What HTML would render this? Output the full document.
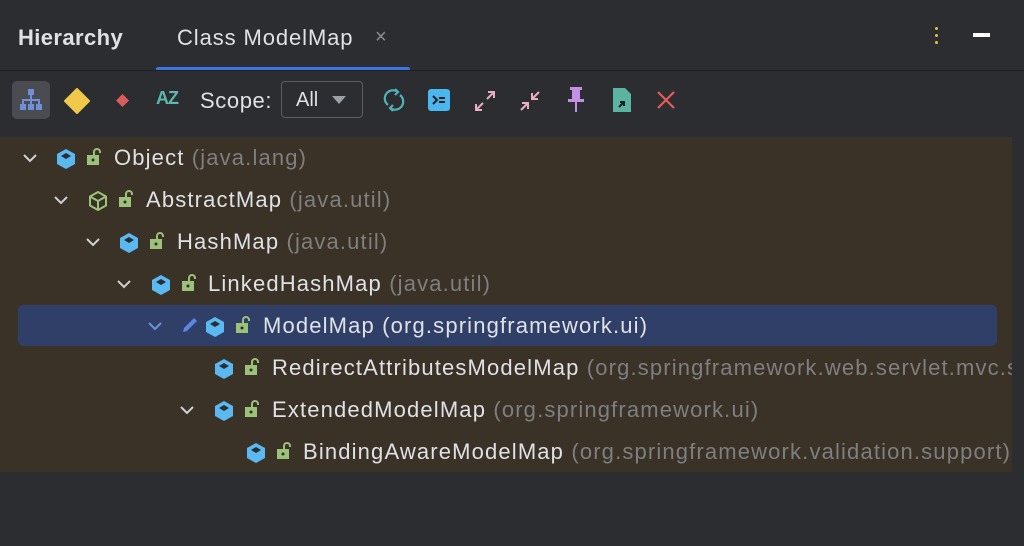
<!DOCTYPE html>
<html><head><style>
body{margin:0;width:1024px;height:546px;background:#2b2d30;font-family:"Liberation Sans",sans-serif;position:relative;overflow:hidden;color:#dfe1e5}
.a{position:absolute}
.tree{left:0;top:137px;width:1012px;height:335px;background:#3a3127}
.sel{left:18px;top:305px;width:979px;height:41px;background:#2f3f68;border-radius:5px}
.row{position:absolute;height:42px;line-height:42px;font-size:22px;letter-spacing:1.15px;white-space:nowrap}
.row .p{color:#7f7f80}
.row svg{position:absolute;top:11px}
</style></head><body>
<div class="a" style="left:18px;top:25px;font-size:22px;font-weight:bold;color:#dfe1e5;letter-spacing:0.4px">Hierarchy</div>
<div class="a" style="left:177px;top:25px;font-size:22px;color:#dfe1e5;letter-spacing:0.9px">Class ModelMap</div>
<div class="a" style="left:375px;top:26px;font-size:20px;color:#8b8e94">×</div>
<div class="a" style="left:156px;top:67px;width:254px;height:4px;background:#3d74e0;border-radius:2px"></div>
<div class="a" style="left:0;top:70px;width:1024px;height:1px;background:#1e1f22"></div>
<div class="a" style="left:935px;top:27px;width:3px;height:3px;background:#e8c13f;border-radius:2px;box-shadow:0 7px #e8c13f,0 14px #e8c13f"></div>
<div class="a" style="left:973px;top:33px;width:17px;height:4px;background:#fff"></div>

<div class="a" style="left:12px;top:81px;width:38px;height:38px;background:#4a4c52;border-radius:5px"></div>
<svg class="a" style="left:18px;top:87px" width="26" height="26" viewBox="0 0 26 26" fill="#6f8fd8"><rect x="10" y="2" width="6" height="6"/><rect x="12" y="8" width="2" height="5"/><rect x="4" y="12" width="18" height="2"/><rect x="4" y="12" width="2" height="5"/><rect x="12" y="12" width="2" height="5"/><rect x="20" y="12" width="2" height="5"/><rect x="2" y="17" width="6" height="6"/><rect x="10" y="17" width="6" height="6"/><rect x="18" y="17" width="6" height="6"/></svg>
<svg class="a" style="left:64px;top:88px" width="26" height="26"><path d="M13 1 L25 13 L13 25 L1 13Z" fill="#f0c94a" stroke="#f0c94a" stroke-linejoin="round" stroke-width="2"/></svg>
<svg class="a" style="left:115px;top:93px" width="15" height="15"><path d="M7.5 1 L14 7.5 L7.5 14 L1 7.5Z" fill="#db5c5c"/></svg>
<div class="a" style="left:156px;top:88px;font-size:18px;color:#5fb8ad;font-weight:bold;letter-spacing:-1px">AZ</div>
<div class="a" style="left:200px;top:88px;font-size:22px;color:#dfe1e5;letter-spacing:0.6px">Scope:</div>
<div class="a" style="left:281px;top:81px;width:82px;height:37px;border:1px solid #5a5d63;border-radius:4px;box-sizing:border-box"></div>
<div class="a" style="left:296px;top:89px;font-size:20px">All</div>
<svg class="a" style="left:331px;top:95px" width="16" height="10"><path d="M1 1 L15 1 L8 9Z" fill="#9da0a8"/></svg>
<svg class="a" style="left:381px;top:87px" width="26" height="26" fill="none" stroke="#4fb3b7" stroke-width="2.2"><path d="M7 18 A8 8 0 0 1 17 5"/><path d="M19 8 A8 8 0 0 1 9 21"/><path d="M14 2 L17 5 L14 8" /><path d="M12 18 L9 21 L12 24"/></svg>
<svg class="a" style="left:428px;top:89px" width="22" height="22"><rect x="0" y="0" width="22" height="22" rx="3" fill="#4ab7ee"/><path d="M5 7 L9 11 L5 15" stroke="#1e1f22" stroke-width="2" fill="none"/><path d="M11 9 H17 M11 13 H17" stroke="#1e1f22" stroke-width="2"/></svg>
<svg class="a" style="left:472px;top:88px" width="26" height="26" stroke="#e9aec0" stroke-width="2" fill="none"><path d="M15 11 L22 4 M16 4 H22 V10 M11 15 L4 22 M4 16 V22 H10"/></svg>
<svg class="a" style="left:517px;top:88px" width="26" height="26" stroke="#e9aec0" stroke-width="2" fill="none"><path d="M15 11 L22 4 M15 5 V11 H21 M11 15 L4 22 M5 15 H11 V21"/></svg>
<svg class="a" style="left:565px;top:86px" width="22" height="28" fill="#c490e6"><rect x="5" y="1" width="12" height="3"/><rect x="7" y="4" width="8" height="9"/><rect x="3" y="13" width="16" height="3"/><rect x="10" y="16" width="2" height="10"/></svg>
<svg class="a" style="left:611px;top:87px" width="22" height="26"><path d="M2 1 H14 L20 7 V25 H2Z" fill="#5bb3a2"/><path d="M8 20 L13 15 M9 15 H13 V19" stroke="#1e1f22" stroke-width="2" fill="none"/></svg>
<svg class="a" style="left:656px;top:90px" width="20" height="20" stroke="#e55b5b" stroke-width="2.2"><path d="M2 2 L18 18 M18 2 L2 18"/></svg>

<div class="a tree"></div>
<div class="a sel"></div>

<svg width="0" height="0" style="position:absolute"><defs>
<g id="cube"><path d="M11 1 L20 6 V16 L11 21 L2 16 V6Z" fill="#5ab9f0"/><path d="M11 5 L16 8 L11 11 L6 8Z" fill="#2b2d30"/></g>
<g id="lock"><rect x="1" y="8" width="12" height="10" fill="#9cc27a"/><circle cx="7" cy="13" r="1.5" fill="#2b2d30"/><path d="M8 8 V5 A3 3 0 0 1 14 5 V6" stroke="#9cc27a" stroke-width="2" fill="none"/></g>
<g id="chev"><path d="M2 5 L8 11 L14 5" stroke="#cfd1d4" stroke-width="2" fill="none"/></g>
</defs></svg>

<div class="row" style="left:0;top:137px;width:1012px">
<svg style="left:22px;top:13px" width="16" height="16"><use href="#chev"/></svg>
<svg style="left:55px" width="22" height="22"><use href="#cube"/></svg>
<svg style="left:86px;top:10px" width="16" height="20"><use href="#lock"/></svg>
<span style="position:absolute;left:114px">Object <span class="p">(java.lang)</span></span></div>

<div class="row" style="left:0;top:179px;width:1012px">
<svg style="left:53px;top:13px" width="16" height="16"><use href="#chev"/></svg>
<svg style="left:87px" width="22" height="22"><path d="M11 2 L19 6.5 V15.5 L11 20 L3 15.5 V6.5Z M3 6.5 L11 11 L19 6.5 M11 11 V20" stroke="#9cc27a" stroke-width="2" fill="none" stroke-linejoin="round"/></svg>
<svg style="left:118px;top:10px" width="16" height="20"><use href="#lock"/></svg>
<span style="position:absolute;left:146px">AbstractMap <span class="p">(java.util)</span></span></div>

<div class="row" style="left:0;top:221px;width:1012px">
<svg style="left:85px;top:13px" width="16" height="16"><use href="#chev"/></svg>
<svg style="left:118px" width="22" height="22"><use href="#cube"/></svg>
<svg style="left:149px;top:10px" width="16" height="20"><use href="#lock"/></svg>
<span style="position:absolute;left:177px">HashMap <span class="p">(java.util)</span></span></div>

<div class="row" style="left:0;top:263px;width:1012px">
<svg style="left:116px;top:13px" width="16" height="16"><use href="#chev"/></svg>
<svg style="left:150px" width="22" height="22"><use href="#cube"/></svg>
<svg style="left:181px;top:10px" width="16" height="20"><use href="#lock"/></svg>
<span style="position:absolute;left:208px">LinkedHashMap <span class="p">(java.util)</span></span></div>

<div class="row" style="left:0;top:305px;width:1012px">
<svg style="left:147px;top:13px" width="16" height="16"><path d="M2 5 L8 11 L14 5" stroke="#6f8fd8" stroke-width="2" fill="none"/></svg>
<svg style="left:180px;top:10px" width="20" height="20"><path d="M3 17 L4 13 L14 3 L17 6 L7 16Z" fill="#5e85e0"/></svg>
<svg style="left:204px" width="22" height="22"><use href="#cube"/></svg>
<svg style="left:235px;top:10px" width="16" height="20"><use href="#lock"/></svg>
<span style="position:absolute;left:263px">ModelMap (org.springframework.ui)</span></div>

<div class="row" style="left:0;top:347px;width:1012px;overflow:hidden">
<svg style="left:213px" width="22" height="22"><use href="#cube"/></svg>
<svg style="left:244px;top:10px" width="16" height="20"><use href="#lock"/></svg>
<span style="position:absolute;left:272px">RedirectAttributesModelMap <span class="p">(org.springframework.web.servlet.mvc.support)</span></span></div>

<div class="row" style="left:0;top:389px;width:1012px">
<svg style="left:179px;top:13px" width="16" height="16"><use href="#chev"/></svg>
<svg style="left:213px" width="22" height="22"><use href="#cube"/></svg>
<svg style="left:244px;top:10px" width="16" height="20"><use href="#lock"/></svg>
<span style="position:absolute;left:272px">ExtendedModelMap <span class="p">(org.springframework.ui)</span></span></div>

<div class="row" style="left:0;top:431px;width:1012px">
<svg style="left:245px" width="22" height="22"><use href="#cube"/></svg>
<svg style="left:276px;top:10px" width="16" height="20"><use href="#lock"/></svg>
<span style="position:absolute;left:303px">BindingAwareModelMap <span class="p">(org.springframework.validation.support)</span></span></div>
</body></html>
